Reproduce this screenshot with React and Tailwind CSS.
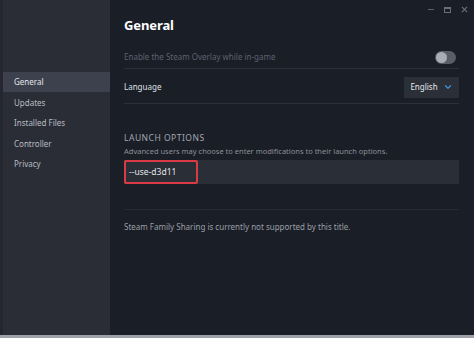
import { ChevronDown } from 'lucide-react'

const navItems = ['General', 'Updates', 'Installed Files', 'Controller', 'Privacy']

export default function App() {
  return (
    <div
      className="w-[474px] h-[338px] flex flex-col bg-[#1a1e26] overflow-hidden"
      style={{ fontFamily: '"Noto Sans", "Open Sans", sans-serif' }}
    >
      <div className="flex flex-1 min-h-0">
        {/* Sidebar */}
        <aside className="w-[110px] shrink-0 bg-[#2a2d36] border-l-[3px] border-[#24272f] pt-[72px] flex flex-col">
          {navItems.map((item, i) => (
            <div
              key={item}
              className={`h-[20px] flex items-center pl-[11px] text-[8px] ${
                i === 0 ? 'bg-[#3d414e] text-[#e4e6ea]' : 'text-[#b9bcc3]'
              } ${i > 0 ? 'mt-[0.5px]' : ''}`}
            >
              {item}
            </div>
          ))}
        </aside>

        {/* Main */}
        <main className="flex-1 relative pl-[14px] pr-[15px] pt-[15px]">
          {/* Window controls */}
          <div className="absolute top-[6px] right-[6px] flex items-center gap-[10px] text-[#6b6f78]">
            <div className="w-[6px] h-[1px] bg-[#5e626b]" />
            <div className="w-[7px] h-[6px] border border-[#6b6f78] border-t-2" />
            <svg width="7" height="7" viewBox="0 0 8 8">
              <path d="M1 1L7 7M7 1L1 7" stroke="#6b6f78" strokeWidth="1.3" />
            </svg>
          </div>

          <h1 className="text-[13px] font-bold text-white leading-[20px] tracking-[-0.1px]">General</h1>

          <div className="mt-[12px] h-[20px] flex items-center justify-between border-b border-[#2c313a] pb-[1px] box-content">
            <span className="text-[8px] text-[#5d6270]">Enable the Steam Overlay while in-game</span>
            <div className="w-[21px] h-[13px] rounded-full bg-[#5a5e68] flex items-center pl-[1px] mr-[3px]">
              <div className="w-[11px] h-[11px] rounded-full bg-[#a9adb5]" />
            </div>
          </div>

          <div className="h-[35px] flex items-center justify-between border-b border-[#2c313a]">
            <span className="text-[8px] text-[#dfe2e6] pt-[2px]">Language</span>
            <div className="h-[21px] w-[55px] bg-[#2b2f38] flex items-center justify-center gap-[5px] rounded-[1px] mt-[2px]">
              <span className="text-[8px] text-[#e6e8eb]">English</span>
              <ChevronDown size={10} strokeWidth={3} className="text-[#3c8fdb]" />
            </div>
          </div>

          <div className="mt-[28px] text-[8.5px] text-[#a3a7b0] tracking-[0.5px] leading-[12px]">LAUNCH OPTIONS</div>
          <div className="mt-[2px] text-[7.5px] text-[#8b9099] leading-[11px]">
            Advanced users may choose to enter modifications to their launch options.
          </div>
          <div className="mt-[3px] h-[24px] bg-[#2a2e37] relative flex items-center">
            <div className="absolute left-0 top-0 h-[24px] w-[74px] border-2 border-[#d93a45] rounded-[2px]" />
            <span className="pl-[5px] text-[8.5px] text-[#e3e5e8]">--use-d3d11</span>
          </div>

          <div className="mt-[25px] border-t border-[#262a33]" />
          <div className="mt-[11px] text-[8px] text-[#9a9ea7]">
            Steam Family Sharing is currently not supported by this title.
          </div>
        </main>
      </div>
      <div className="h-[3px] bg-[#9ea1a7] shrink-0" />
    </div>
  )
}
